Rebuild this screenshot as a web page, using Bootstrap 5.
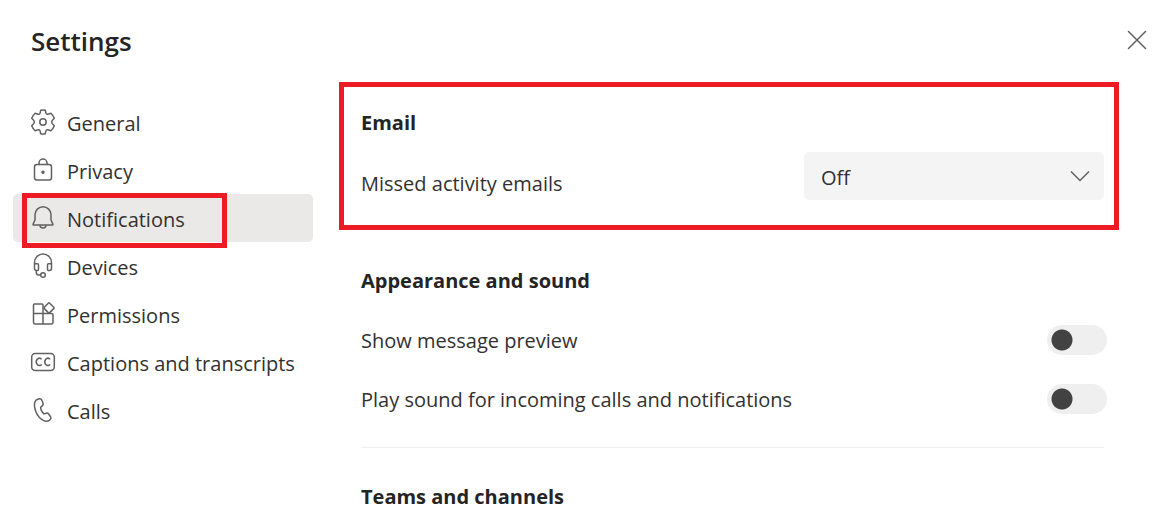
<!DOCTYPE html>
<html lang="en">
<head>
<meta charset="utf-8">
<meta name="viewport" content="width=device-width, initial-scale=1">
<title>Settings</title>
<link href="https://cdn.jsdelivr.net/npm/bootstrap@5.3.0/dist/css/bootstrap.min.css" rel="stylesheet">
<style>
  body { font-family: "Segoe UI", "Open Sans", "Noto Sans", sans-serif; font-size: 20px; line-height: 28px; color: #323130; background: #fff; }
  h1 { font-size: 26px; line-height: 34px; font-weight: 600; color: #242424; }
  h2 { font-size: 20px; line-height: 28px; font-weight: 700; color: #242424; }
  .settings-header { padding: 24px 20px 24px 31px; }
  .close-btn { width: 20px; height: 20px; margin-bottom: 2px; line-height: 0; }
  .close-btn svg { display: block; }
  .settings-menu { width: 300px; margin: 16px 26px 0 13px; }
  .menu-item { height: 48px; padding: 4px 16px 0; gap: 10px; color: #323130; border-radius: 5px; text-decoration: none; }
  .menu-item.active { background: #ebe9e8; }
  .menu-item svg { width: 28px; height: 28px; margin-bottom: 5px; }
  .line-icon { fill: none; stroke: #616161; stroke-width: 1.5; stroke-linecap: round; stroke-linejoin: round; }
  .callout { border: 5px solid #ed1c24; }
  .menu-callout { position: absolute; inset: -1px 86px -6px 9px; pointer-events: none; }
  .settings-main { margin-right: 48px; }
  .email-panel { padding: 22px 10px 25px 17px; }
  .plain-panel { padding: 37px 15px 0 22px; }
  .section-title { margin-bottom: 15px; }
  .drop { width: 300px; height: 48px; padding: 3px 48px 0 17px; border: 0; border-radius: 5px; font-size: 20px; color: #323130; background-color: #f4f4f4;
    background-image: url("data:image/svg+xml,%3Csvg xmlns='http://www.w3.org/2000/svg' viewBox='0 0 20 12'%3E%3Cpath d='M1 1.5l9 9 9-9' fill='none' stroke='%23616161' stroke-width='1.5'/%3E%3C/svg%3E");
    background-size: 20px 12px; background-position: right 14px center; }
  .drop-label { padding-top: 16px; }
  .toggle-row { height: 59px; margin-right: -3px; }
  .toggle-row label { padding-top: 3px; }
  .toggle-row .form-check-input { width: 60px; height: 30px; margin: 0; border: 0; border-radius: 15px; background: #efefef radial-gradient(circle at 15px 15px, #424242 10px, transparent 11px); }
  .toggle-row .form-check-input:checked { background: #d6d6ee radial-gradient(circle at 45px 15px, #424242 10px, transparent 11px); }
  .divider { margin: 19px 0 0; border-top: 1px solid #f0f0f0; opacity: 1; }
  .next-title { margin-top: 35px; }
</style>
</head>
<body>
<header class="settings-header d-flex justify-content-between align-items-center">
  <h1 class="m-0">Settings</h1>
  <button type="button" class="close-btn btn p-0 border-0" aria-label="Close">
    <svg class="line-icon" width="20" height="20" viewBox="0 0 20 20"><path d="M1.500 1.500l17 17M18.500 1.500l-17 17"/></svg>
  </button>
</header>
<div class="d-flex align-items-start">
  <nav class="settings-menu flex-shrink-0" aria-label="Settings sections">
    <a href="#general" class="menu-item d-flex align-items-center">
      <svg class="line-icon" viewBox="0 0 28 28"><circle cx="14" cy="14" r="3.200"/><path d="M11.700 2.200Q14 1.600 16.300 2.200L16.900 5.100Q17.300 6.500 18.800 6.200L21.900 5.300Q24.100 7.300 25.300 10.300L23.200 12.500Q22 14 23.200 15.500L25.300 17.700Q24.100 20.700 21.900 22.700L18.800 21.800Q17.300 21.500 16.900 22.900L16.300 25.800Q14 26.400 11.700 25.800L11.100 22.900Q10.700 21.500 9.200 21.800L6.100 22.700Q3.900 20.700 2.700 17.700L4.800 15.500Q6 14 4.800 12.500L2.700 10.300Q3.900 7.300 6.100 5.300L9.200 6.200Q10.700 6.500 11.100 5.100Z"/></svg>
      <span>General</span></a>
    <a href="#privacy" class="menu-item d-flex align-items-center">
      <svg class="line-icon" viewBox="0 0 28 28"><rect x="5.500" y="8.500" width="17" height="15.500" rx="2.500"/><path d="M10 8.500V7a4 4 0 0 1 8 0v1.500"/><circle cx="14" cy="16.200" r="1" fill="#616161"/></svg>
      <span>Privacy</span></a>
    <div class="position-relative">
      <a href="#notifications" class="menu-item active d-flex align-items-center" aria-current="page">
        <svg class="line-icon" viewBox="0 0 28 28"><path d="M14 2.800a8 8 0 0 0-8 8v5.200l-1.900 4.100q-.3.900.6.900h18.600q.9 0 .6-.9L22 16v-5.200a8 8 0 0 0-8-8ZM11 21a3 3 0 0 0 6 0"/></svg>
        <span>Notifications</span></a>
      <div class="menu-callout callout"></div>
    </div>
    <a href="#devices" class="menu-item d-flex align-items-center">
      <svg class="line-icon" viewBox="0 0 28 28"><path d="M5.500 12v-1.500a8.500 8.500 0 0 1 17 0V12M5.500 11.800h3q1 0 1 1v4.700q0 1-1 1h-1a2 2 0 0 1-2-2ZM22.500 11.800h-3q-1 0-1 1v4.700q0 1 1 1h1a2 2 0 0 0 2-2ZM7.300 18.500v2q0 2.500 2.500 2.500h1.700"/><circle cx="14" cy="23" r="2.300"/></svg>
      <span>Devices</span></a>
    <a href="#permissions" class="menu-item d-flex align-items-center">
      <svg class="line-icon" viewBox="0 0 28 28"><path d="M14 13.500V5q0-1-1-1H5.500q-1 0-1 1v17.500q0 1.500 1.500 1.500h16.500q1.500 0 1.500-1.500V15q0-1.500-1.500-1.500H4.500M14 13.500V24"/><path d="M19.300 3.200q.7-.7 1.400 0l4 4q.7.700 0 1.400l-4 4q-.7.700-1.400 0l-4-4q-.7-.7 0-1.400Z"/></svg>
      <span>Permissions</span></a>
    <a href="#captions" class="menu-item d-flex align-items-center">
      <svg class="line-icon" viewBox="0 0 28 28"><rect x="2.700" y="5.500" width="22.600" height="17" rx="3.500"/><path d="M12.200 10.800a3.200 3.600 0 1 0 0 6.100M20.700 10.800a3.200 3.600 0 1 0 0 6.100"/></svg>
      <span>Captions and transcripts</span></a>
    <a href="#calls" class="menu-item d-flex align-items-center">
      <svg class="line-icon" viewBox="0 0 28 28"><path d="M8.700 3.300l1.500-.5q1.700-.4 2.500 1.200l1.300 3q.6 1.500-.5 2.600l-1.800 1.700q-.3 3.200 3.300 6.600l2.400-.7q1.300-.4 2.200.8l2 2.800q.9 1.500-.4 2.700l-1 .9q-2 1.600-4.800.5Q9.500 22.500 6.800 15.500Q4.600 9.500 6 5.800Q6.800 3.900 8.700 3.300Z"/></svg>
      <span>Calls</span></a>
  </nav>
  <main class="settings-main flex-grow-1">
    <section class="email-panel callout">
      <h2 class="section-title">Email</h2>
      <div class="d-flex justify-content-between align-items-center">
        <label for="missed" class="drop-label">Missed activity emails</label>
        <select id="missed" class="form-select drop"><option>Off</option><option>As soon as possible</option><option>Once every hour</option><option>Daily</option></select>
      </div>
    </section>
    <section class="plain-panel">
      <h2 class="section-title">Appearance and sound</h2>
      <div class="toggle-row d-flex justify-content-between align-items-center">
        <label for="preview">Show message preview</label>
        <input id="preview" class="form-check-input" type="checkbox" role="switch">
      </div>
      <div class="toggle-row d-flex justify-content-between align-items-center">
        <label for="sound">Play sound for incoming calls and notifications</label>
        <input id="sound" class="form-check-input" type="checkbox" role="switch">
      </div>
      <hr class="divider">
      <h2 class="next-title mb-0">Teams and channels</h2>
    </section>
  </main>
</div>
<script src="https://cdn.jsdelivr.net/npm/bootstrap@5.3.0/dist/js/bootstrap.bundle.min.js"></script>
</body>
</html>
